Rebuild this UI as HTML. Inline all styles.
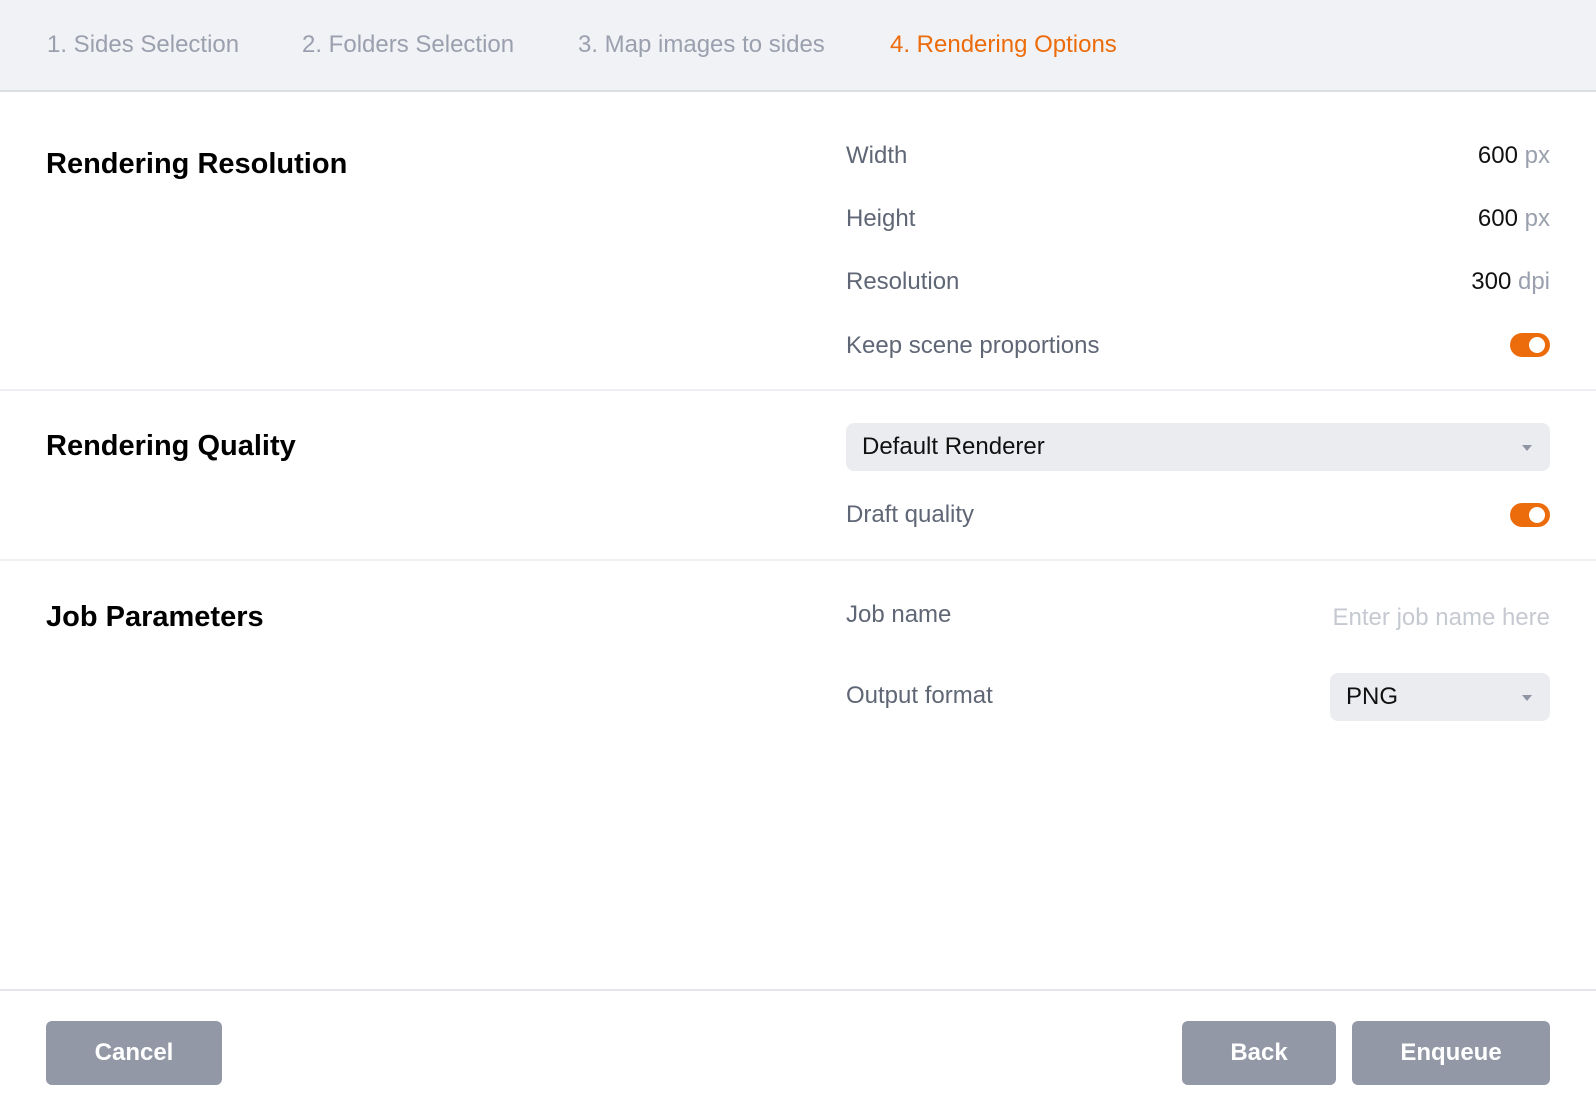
<!DOCTYPE html>
<html><head><meta charset="utf-8"><style>
*{margin:0;padding:0;box-sizing:border-box}
body{width:1596px;height:1113px;background:#fff;position:relative;overflow:hidden;font-family:"Liberation Sans",sans-serif}
.a{position:absolute;white-space:nowrap;line-height:24px}
.hdr{position:absolute;left:0;top:0;width:1596px;height:92px;background:#f1f2f6;border-bottom:2px solid #dcdde2}
.tab{font-size:24px;color:#9aa0ae;top:33px}
.h{font-size:29px;font-weight:bold;color:#000;line-height:28px}
.l{font-size:24px;color:#5f6675;left:846px}
.v{font-size:24px;color:#111;right:46px}
.v span{color:#9aa0ae}
.hr{position:absolute;left:0;width:1596px;height:2px;background:#eeeff2}
.tg{position:absolute;left:1510px;width:40px;height:24px;border-radius:12px;background:#ec6c0b}
.tg::after{content:"";position:absolute;right:5px;top:4px;width:16px;height:16px;border-radius:50%;background:#fff}
.sel{position:absolute;background:#ebecf0;border-radius:8px;font-size:24px;color:#111;line-height:48px;padding-left:16px}
.sel::after{content:"";position:absolute;right:18px;top:22px;border-left:5px solid transparent;border-right:5px solid transparent;border-top:6px solid #8f95a3}
.btn{position:absolute;top:1021px;height:64px;background:#9298a6;border-radius:6px;color:#fff;font-weight:bold;font-size:24px;line-height:64px;text-align:center}
</style></head><body>
<div class="hdr"></div>
<div class="a tab" style="left:47px">1. Sides Selection</div>
<div class="a tab" style="left:302px">2. Folders Selection</div>
<div class="a tab" style="left:578px">3. Map images to sides</div>
<div class="a tab" style="left:890px;color:#ec6c0b">4. Rendering Options</div>

<div class="a h" style="left:46px;top:150px">Rendering Resolution</div>
<div class="a l" style="top:144px">Width</div>
<div class="a v" style="top:144px">600 <span>px</span></div>
<div class="a l" style="top:207px">Height</div>
<div class="a v" style="top:207px">600 <span>px</span></div>
<div class="a l" style="top:270px">Resolution</div>
<div class="a v" style="top:270px">300 <span>dpi</span></div>
<div class="a l" style="top:334px">Keep scene proportions</div>
<div class="tg" style="top:333px"></div>
<div class="hr" style="top:389px"></div>

<div class="a h" style="left:46px;top:432px">Rendering Quality</div>
<div class="sel" style="left:846px;top:423px;width:704px;height:48px">Default Renderer</div>
<div class="a l" style="top:503px">Draft quality</div>
<div class="tg" style="top:503px"></div>
<div class="hr" style="top:559px"></div>

<div class="a h" style="left:46px;top:603px">Job Parameters</div>
<div class="a l" style="top:603px">Job name</div>
<div class="a v" style="top:606px;color:#c6c9d1">Enter job name here</div>
<div class="a l" style="top:684px">Output format</div>
<div class="sel" style="left:1330px;top:673px;width:220px;height:48px">PNG</div>

<div class="hr" style="top:989px;background:#e4e5e8"></div>
<div class="btn" style="left:46px;width:176px">Cancel</div>
<div class="btn" style="left:1182px;width:154px">Back</div>
<div class="btn" style="left:1352px;width:198px">Enqueue</div>
</body></html>
